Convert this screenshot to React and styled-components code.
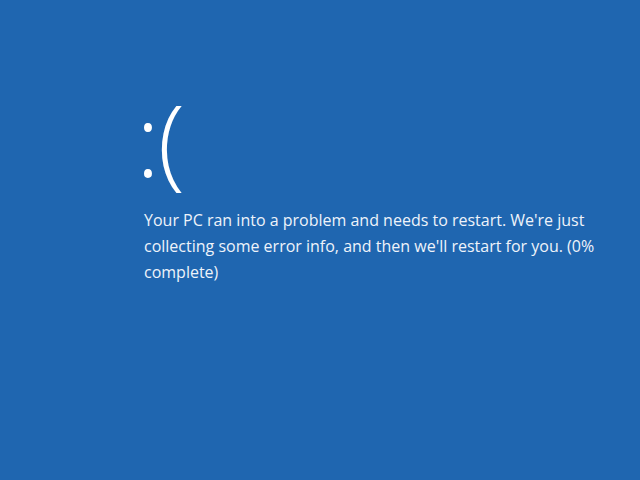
import React from 'react';
import styled, { createGlobalStyle } from 'styled-components';

const GlobalStyle = createGlobalStyle`
  html, body {
    margin: 0;
    padding: 0;
    background: #1f66b0;
  }
`;

const Screen = styled.div`
  width: 640px;
  height: 480px;
  background: #1f66b0;
  color: #ffffff;
  font-family: "Open Sans", "Noto Sans", sans-serif;
  box-sizing: border-box;
  padding: 88px 0 0 136px;
  display: flex;
  flex-direction: column;
`;

const Face = styled.div`
  font-size: 100px;
  font-weight: 300;
  line-height: 1;
  margin: 0 0 19px 0;
  letter-spacing: -2px;
`;

const Message = styled.p`
  margin: 0 0 0 8px;
  width: 460px;
  font-size: 16px;
  font-weight: 400;
  line-height: 26px;
  color: #eef3fa;
`;

const App = () => (
  <>
    <GlobalStyle />
    <Screen>
      <Face>:(</Face>
      <Message>
        Your PC ran into a problem and needs to restart. We're just collecting
        some error info, and then we'll restart for you. (0% complete)
      </Message>
    </Screen>
  </>
);

export default App;
